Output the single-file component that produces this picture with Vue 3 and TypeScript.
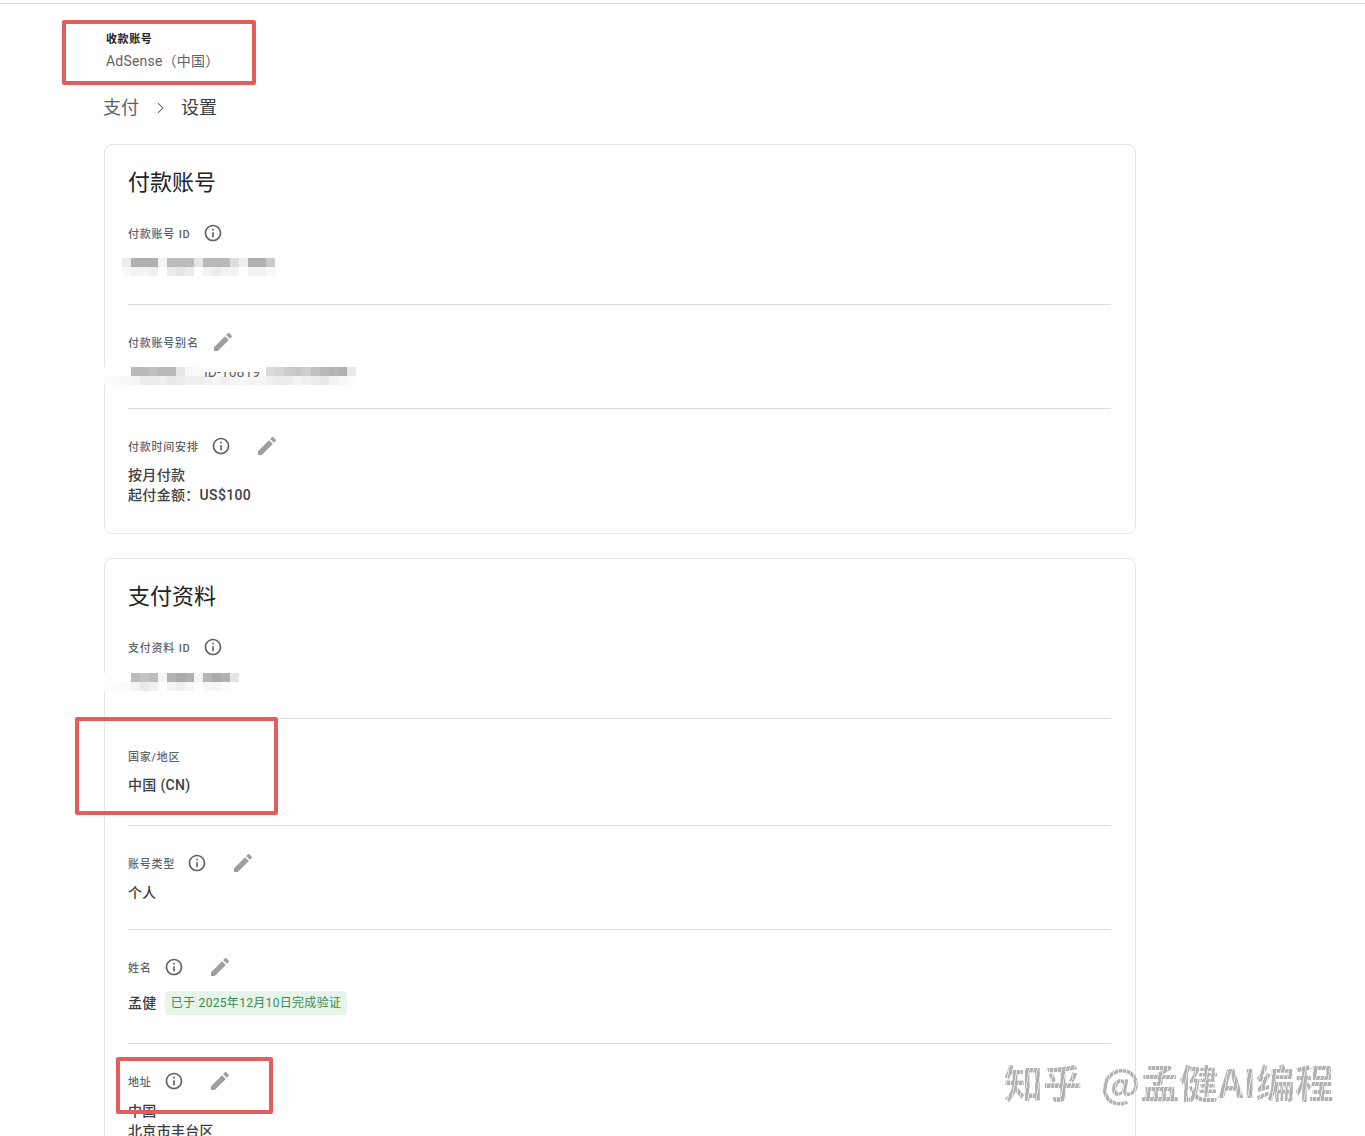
<script setup lang="ts">
interface Row {
  label: string
  info?: boolean
  edit?: boolean
  lines?: string[]
  mosaic?: number
  tag?: string
  kind: string
}

interface Card {
  title: string
  rows: Row[]
}

const cards: Card[] = [
  {
    title: '付款账号',
    rows: [
      { label: '付款账号 ID', info: true, mosaic: 0, kind: 'row-id' },
      { label: '付款账号别名', edit: true, mosaic: 1, kind: 'row-alias' },
      { label: '付款时间安排', info: true, edit: true, lines: ['按月付款', '起付金额：US$100'], kind: 'row-last' },
    ],
  },
  {
    title: '支付资料',
    rows: [
      { label: '支付资料 ID', info: true, mosaic: 2, kind: 'row-id' },
      { label: '国家/地区', lines: ['中国 (CN)'], kind: 'row-country' },
      { label: '账号类型', info: true, edit: true, lines: ['个人'], kind: 'row-type' },
      { label: '姓名', info: true, edit: true, lines: ['孟健'], tag: '已于 2025年12月10日完成验证', kind: 'row-name' },
      { label: '地址', info: true, edit: true, lines: ['中国', '北京市丰台区'], kind: 'row-address' },
    ],
  },
]

// pixelated redactions: each row of cells is a 9px band, values are grey opacity
const mosaics: number[][][] = [
  [
    [0.1, 0.42, 0.42, 0.42, 0.06, 0.36, 0.36, 0.36, 0.14, 0.38, 0.38, 0.38, 0.18, 0.08, 0.42, 0.42, 0.28],
    [0.03, 0.07, 0.06, 0.08, 0, 0.1, 0.14, 0.1, 0, 0.07, 0.1, 0.07, 0.06, 0, 0.07, 0.07, 0.03],
  ],
  [
    [0, 0, 0, 0.38, 0.38, 0.34, 0.38, 0.38, 0.14, 0.04, 0.03, 0, 0, 0, 0, 0, 0, 0, 0.2, 0.22, 0.28, 0.3, 0.26, 0.34, 0.38, 0.4, 0.42, 0.12],
    [0.02, 0.03, 0.04, 0.05, 0.1, 0.1, 0.09, 0.12, 0.1, 0.08, 0.09, 0.08, 0.05, 0.08, 0.06, 0.05, 0.06, 0.05, 0.08, 0.1, 0.1, 0.06, 0.08, 0.1, 0.12, 0.06, 0.04, 0.02],
  ],
  [
    [0, 0, 0, 0.36, 0.32, 0.36, 0.06, 0.42, 0.46, 0.42, 0.06, 0.4, 0.46, 0.42, 0.14],
    [0.01, 0.02, 0.02, 0.06, 0.12, 0.08, 0, 0.06, 0.08, 0.05, 0, 0.05, 0.05, 0.02, 0],
  ],
]

const editPath =
  'M3 17.25V21h3.75L17.81 9.94l-3.75-3.75L3 17.25zM20.71 7.04c.39-.39.39-1.02 0-1.41l-2.34-2.34c-.39-.39-1.02-.39-1.41 0l-1.83 1.83 3.75 3.75 1.83-1.83z'
const infoPath =
  'M11 7h2v2h-2zm0 4h2v6h-2zm1-9C6.48 2 2 6.48 2 12s4.48 10 10 10 10-4.48 10-10S17.52 2 12 2zm0 18c-4.41 0-8-3.59-8-8s3.59-8 8-8 8 3.59 8 8-3.59 8-8 8z'
</script>

<template>
  <div class="page">
    <header class="account">
      <div class="account-label">收款账号</div>
      <div class="account-name">AdSense（中国）</div>
    </header>

    <nav class="crumbs">
      <span class="crumb-parent">支付</span>
      <svg class="chevron" width="24" height="24" viewBox="0 0 24 24">
        <path d="M9.3 6.7 8.6 7.4 13.2 12l-4.6 4.6.7.7 5.3-5.3z" />
      </svg>
      <span class="crumb-current">设置</span>
    </nav>

    <main class="cards">
      <section v-for="card in cards" :key="card.title" class="card">
        <h2 class="card-title">{{ card.title }}</h2>
        <div v-for="row in card.rows" :key="row.label" class="row" :class="row.kind">
          <div class="label-line">
            <span class="label">{{ row.label }}</span>
            <svg v-if="row.info" class="info" width="20" height="20" viewBox="0 0 24 24">
              <path :d="infoPath" />
            </svg>
            <svg v-if="row.edit" class="edit" width="24" height="24" viewBox="0 0 24 24">
              <path :d="editPath" />
            </svg>
          </div>

          <div v-if="row.mosaic !== undefined" class="mosaic" :class="'mosaic-' + row.mosaic">
            <div v-for="(band, i) in mosaics[row.mosaic]" :key="i" class="band">
              <i
                v-for="(o, j) in band"
                :key="j"
                class="cell"
                :style="{ background: `rgba(70, 70, 70, ${o})` }"
              />
            </div>
            <span v-if="row.mosaic === 1" class="peek"><span>ID-10819</span></span>
          </div>

          <div v-for="line in row.lines" :key="line" class="value">
            <span>{{ line }}</span>
            <span v-if="row.tag" class="tag">{{ row.tag }}</span>
          </div>
        </div>
      </section>
    </main>

    <!-- annotations drawn on top of the screenshot -->
    <div class="mark mark-account" />
    <div class="mark mark-country" />
    <div class="mark mark-address" />

    <div class="watermark">知乎 <span class="wm-author">@孟健AI编程</span></div>
  </div>
</template>

<style scoped>
.page {
  position: relative;
  height: 1136px;
  overflow: hidden;
  background: #fff;
  color: #202124;
  font-family: Roboto, 'Noto Sans CJK SC', sans-serif;
}

.page::before {
  content: '';
  display: block;
  height: 3px;
  border-bottom: 1px solid #dadce0;
}

.account {
  padding: 28px 0 0 106px;
}

.account-label {
  font-size: 11px;
  line-height: 16px;
  font-weight: 700;
  letter-spacing: 0.6px;
  color: #202124;
}

.account-name {
  margin-top: 3px;
  font-size: 14px;
  line-height: 20px;
  letter-spacing: 0.2px;
  color: #5f6368;
}

.crumbs {
  display: flex;
  align-items: center;
  gap: 9px;
  margin-top: 23px;
  padding-left: 103px;
  font-size: 18px;
  line-height: 28px;
}

.crumb-parent {
  color: #5f6368;
}

.crumb-current {
  color: #3c4043;
}

.chevron {
  margin: 0 -1px 0 1px;
  fill: #5f6368;
}

.cards {
  display: flex;
  flex-direction: column;
  gap: 24px;
  width: 1032px;
  margin: 22px 0 0 104px;
}

.card {
  border: 1px solid #e3e5e8;
  border-radius: 8px;
  padding: 0 24px 0 23px;
}

.card-title {
  margin: 0;
  padding-top: 22px;
  font-size: 22px;
  line-height: 32px;
  font-weight: 400;
  color: #202124;
}

.row {
  border-top: 1px solid #dadce0;
}

.row-id {
  border-top: 0;
  margin-top: 22px;
  padding-bottom: 26px;
}

.row-alias {
  padding: 25px 0 21px;
}

.row-last {
  padding: 25px 0 28px;
}

.row-country {
  padding: 25px 0 30px;
}

.row-type {
  padding: 25px 0 26px;
}

.row-name {
  padding: 25px 0 28px;
}

.row-address {
  padding: 25px 0 24px;
}

.label-line {
  display: flex;
  align-items: center;
  height: 24px;
}

.label {
  font-size: 11px;
  font-weight: 500;
  letter-spacing: 0.78px;
  color: #5f6368;
}

.info {
  flex: none;
  margin-left: 12px;
  fill: #5f6368;
}

.edit {
  flex: none;
  margin-left: 12px;
  fill: #9e9e9e;
}

.info + .edit {
  margin-left: 24px;
}

.value {
  display: flex;
  align-items: center;
  font-size: 14px;
  line-height: 20px;
  font-weight: 500;
  letter-spacing: 0.32px;
  color: #3c4043;
}

.label-line + .value {
  margin-top: 7px;
}

.row-type .label-line + .value {
  margin-top: 8px;
}

.row-name .label-line + .value {
  margin-top: 12px;
}

.row-address .label-line + .value {
  margin-top: 8px;
}

.tag {
  margin-left: 8px;
  padding: 0 6px;
  border-radius: 4px;
  background: #e6f4ea;
  color: #3a8a56;
  font-size: 12px;
  line-height: 24px;
  font-weight: 400;
  letter-spacing: 0.32px;
}

.mosaic {
  position: relative;
  display: flex;
  flex-direction: column;
  height: 20px;
}

.mosaic-0 {
  margin: 13px 0 0 -6px;
}

.mosaic-1 {
  margin: 13px 0 0 -24px;
}

.mosaic-2 {
  margin: 14px 0 -1px -24px;
}

.band {
  display: flex;
  width: fit-content;
  height: 9px;
  background: #fff;
}

.cell {
  display: block;
  flex: none;
  width: 9px;
  height: 9px;
}

/* the bit of the alias the redaction missed */
.peek {
  position: absolute;
  left: 100px;
  top: 5px;
  height: 5px;
  width: 58px;
  overflow: hidden;
  font-size: 14px;
  line-height: 20px;
  color: #5f6368;
}

.peek span {
  display: block;
  margin-top: -10px;
}

.mark {
  position: absolute;
  box-sizing: border-box;
  border: 4px solid #e45c5c;
  border-radius: 2px;
}

.mark-account {
  left: 62px;
  top: 20px;
  width: 194px;
  height: 65px;
}

.mark-country {
  left: 75px;
  top: 717px;
  width: 203px;
  height: 98px;
}

.mark-address {
  left: 116px;
  top: 1057px;
  width: 157px;
  height: 57px;
}

.watermark {
  position: absolute;
  left: 1004px;
  top: 1054px;
  white-space: pre;
  font-family: 'Noto Sans CJK SC', sans-serif;
  font-size: 39px;
  line-height: 54px;
  font-weight: 700;
  color: #c4c4c4;
  background: repeating-linear-gradient(100deg, #b2b2b2 0 3px, #e2e2e2 3px 4px);
  -webkit-background-clip: text;
  background-clip: text;
  -webkit-text-fill-color: transparent;
}

.wm-author {
  margin-left: 10px;
}
</style>

<style>
html,
body {
  margin: 0;
  background: #fff;
}
</style>
